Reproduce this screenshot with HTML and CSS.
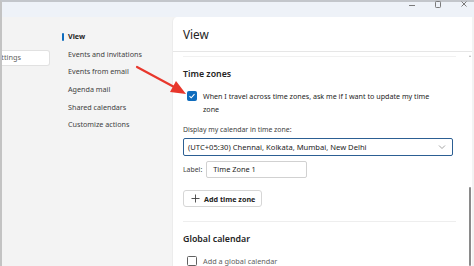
FILE: index.html
```html
<!DOCTYPE html>
<html>
<head>
<meta charset="utf-8">
<link rel="stylesheet" href="styles.css">
</head>
<body>
<div class="window">
  <div class="titlebar">
    <div class="controls">
      <svg class="ctl" width="10" height="10" viewBox="0 0 10 10"><path d="M2 5.5h6" stroke="#7a7a7a" stroke-width="1" fill="none"/></svg>
      <svg class="ctl" width="10" height="10" viewBox="0 0 10 10"><rect x="2.5" y="1.5" width="5" height="6" rx="0.8" stroke="#7a7a7a" stroke-width="1" fill="none"/></svg>
      <svg class="ctl" width="10" height="10" viewBox="0 0 10 10"><path d="M2.5 1.5l5 5M7.5 1.5l-5 5" stroke="#7a7a7a" stroke-width="1" fill="none"/></svg>
    </div>
  </div>
  <div class="main">
    <div class="leftcol">
      <div class="search"><span class="search-text">Search settings</span></div>
    </div>
    <nav class="nav">
      <div class="nav-item active">View</div>
      <div class="nav-item">Events and invitations</div>
      <div class="nav-item">Events from email</div>
      <div class="nav-item">Agenda mail</div>
      <div class="nav-item">Shared calendars</div>
      <div class="nav-item">Customize actions</div>
    </nav>
    <section class="panel">
      <h1 class="panel-title">View</h1>
      <div class="panel-body">
        <div class="shadow-line"></div>
        <h2 class="section-title">Time zones</h2>
        <div class="check-row">
          <span class="checkbox checked"><svg width="8" height="8" viewBox="0 0 8 8"><path d="M1.5 4.2l1.7 1.6 3.3-3.6" stroke="#fff" stroke-width="1.1" fill="none"/></svg></span>
          <span class="check-label">When I travel across time zones, ask me if I want to update my time zone</span>
        </div>
        <div class="field-label">Display my calendar in time zone:</div>
        <div class="dropdown">
          <span>(UTC+05:30) Chennai, Kolkata, Mumbai, New Delhi</span>
          <svg width="8" height="6" viewBox="0 0 8 6"><path d="M1 1.5l3 3 3-3" stroke="#9a9a9a" stroke-width="0.9" fill="none"/></svg>
        </div>
        <div class="label-row">
          <span class="label-text">Label:</span>
          <div class="textbox">Time Zone 1</div>
        </div>
        <button class="add-btn"><svg width="9" height="9" viewBox="0 0 9 9"><path d="M4.5 0.5v8M0.5 4.5h8" stroke="#424242" stroke-width="0.9" fill="none"/></svg><span>Add time zone</span></button>
        <div class="divider"></div>
        <h2 class="section-title global">Global calendar</h2>
        <div class="check-row">
          <span class="checkbox"></span>
          <span class="check-label muted">Add a global calendar</span>
        </div>
      </div>
      <div class="scroll-up"></div>
      <div class="scrollbar"></div>
    </section>
  </div>
  <svg class="arrow" width="474" height="266" viewBox="0 0 474 266">
    <line x1="137" y1="67" x2="176" y2="88" stroke="#e8372c" stroke-width="2.2" stroke-linecap="round"/>
    <polygon points="186,94 170,92 176,81" fill="#e8372c"/>
  </svg>
</div>
</body>
</html>
```

FILE: styles.css
```css
* { box-sizing: border-box; }
html, body { margin: 0; padding: 0; }
body {
  width: 474px;
  height: 266px;
  overflow: hidden;
  font-family: "Noto Sans", "Open Sans", sans-serif;
  color: #242424;
  background: #f3f3f3;
}
.window {
  position: relative;
  width: 474px;
  height: 266px;
  border-top: 2px solid #c3c6cb;
  border-left: 2px solid #c3c3c3;
  display: flex;
  flex-direction: column;
  background: #f3f3f3;
}
.titlebar {
  height: 15px;
  background: #eef2f8;
  display: flex;
  justify-content: flex-end;
  flex: none;
}
.controls {
  display: flex;
  gap: 16px;
  padding-right: 5px;
  margin-top: -2px;
}
.ctl { display: block; }
.main {
  flex: 1;
  display: flex;
  min-height: 0;
}
.leftcol {
  width: 58px;
  flex: none;
  background: #f3f3f3;
  overflow: hidden;
  padding-top: 33px;
}
.search {
  width: 50px;
  margin-left: -2px;
  height: 16px;
  background: #fff;
  border: 1px solid #e1e1e1;
  border-left: none;
  border-radius: 0 3px 3px 0;
  overflow: hidden;
  position: relative;
}
.search-text {
  position: absolute;
  right: 28px;
  top: 1px;
  font-size: 7.3px;
  color: #616161;
  white-space: nowrap;
}
.nav {
  width: 112px;
  flex: none;
  background: #f4f4f4;
  padding-top: 11px;
  padding-left: 8px;
}
.nav-item {
  position: relative;
  height: 17.7px;
  line-height: 17.7px;
  font-size: 7.2px;
  color: #424242;
  white-space: nowrap;
}
.nav-item.active {
  font-weight: 700;
  color: #242424;
}
.nav-item.active::before {
  content: "";
  position: absolute;
  left: -6px;
  top: 5px;
  width: 2px;
  height: 8px;
  border-radius: 1px;
  background: #0f6cbd;
}
.panel {
  position: relative;
  flex: 1;
  background: #fff;
  border-top-left-radius: 5px;
  border-left: 1px solid #ececec;
  margin-right: 2px;
}
.panel-title {
  margin: 0;
  height: 35px;
  padding: 8px 0 0 10px;
  font-size: 11.8px;
  font-weight: 400;
  line-height: 18px;
  color: #242424;
  border-bottom: 1px solid #e6e6e6;
}
.panel-body {
  padding: 0 16px 0 10px;
}
.shadow-line {
  height: 1px;
  background: #f1f1f1;
  margin-top: 4px;
}
.section-title {
  margin: 10px 0 0 0;
  font-size: 8.8px;
  font-weight: 600;
  line-height: 14px;
  color: #242424;
}
.check-row {
  display: flex;
  align-items: flex-start;
  gap: 6px;
  margin-top: 9px;
  padding-left: 4px;
}
.checkbox {
  width: 10px;
  height: 10px;
  flex: none;
  border: 1px solid #616161;
  border-radius: 1.5px;
  display: flex;
  align-items: center;
  justify-content: center;
  margin-top: 1px;
}
.checkbox.checked {
  background: #0f6cbd;
  border-color: #0f6cbd;
}
.checkbox svg { display: block; }
.check-label {
  font-size: 7.15px;
  line-height: 12.5px;
  color: #242424;
  width: 240px;
}
.check-label.muted { color: #616161; font-size: 7.3px; }
.field-label {
  margin-top: 9px;
  font-size: 6.9px;
  line-height: 11px;
  color: #424242;
}
.dropdown {
  margin-top: 3px;
  height: 18px;
  width: 270px;
  border: 1px solid #2c5f93;
  border-radius: 2px;
  display: flex;
  align-items: center;
  justify-content: space-between;
  padding: 0 6px 0 4px;
  font-size: 7.6px;
  color: #242424;
}
.dropdown svg { display: block; }
.label-row {
  display: flex;
  align-items: center;
  gap: 4px;
  margin-top: 5px;
}
.label-text {
  font-size: 6.9px;
  color: #424242;
}
.textbox {
  width: 101px;
  height: 17px;
  border: 1px solid #d1d1d1;
  border-radius: 2px;
  font-size: 7.4px;
  line-height: 15px;
  padding-left: 6px;
  color: #242424;
}
.add-btn {
  margin-top: 12px;
  height: 17px;
  width: 79px;
  border: 1px solid #d6d6d6;
  border-radius: 3px;
  background: #fff;
  display: flex;
  align-items: center;
  gap: 4px;
  padding: 0 0 0 7px;
  font-family: inherit;
  font-size: 7.2px;
  font-weight: 700;
  color: #242424;
}
.add-btn svg { display: block; }
.divider {
  height: 1px;
  background: #eeeeee;
  margin-top: 14px;
}
.section-title.global { margin-top: 10px; }
.scroll-up {
  position: absolute;
  right: 1px;
  top: 38px;
  width: 0;
  height: 0;
  border-left: 1.5px solid transparent;
  border-right: 1.5px solid transparent;
  border-bottom: 2px solid #b5b5b5;
}
.scrollbar {
  position: absolute;
  right: 1px;
  top: 170px;
  bottom: 0;
  width: 2px;
  background: #8a8a8a;
  border-radius: 1px;
}
.arrow {
  position: absolute;
  left: -2px;
  top: -2px;
  pointer-events: none;
}
```
